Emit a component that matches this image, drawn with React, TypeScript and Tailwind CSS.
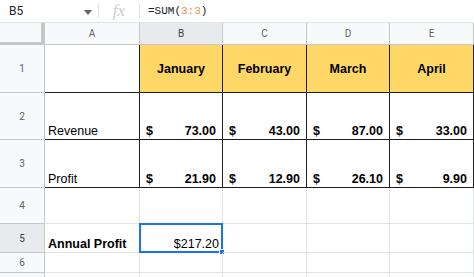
import type { ReactNode } from 'react';

const cols = ['A', 'B', 'C', 'D', 'E', ''];
const rowHeights = ['h-[48px]', 'h-[47px]', 'h-[48px]', 'h-[36px]', 'h-[29px]', 'h-[20px]', 'h-[20px]'];

type Row = {
  cells: ReactNode[];
  bold?: boolean;
};

function Money({ value }: { value: string }) {
  return (
    <div className="flex w-full items-end justify-between pl-[6px] pr-[6px] pb-[1px] font-bold leading-[14px]">
      <span>$</span>
      <span>{value}</span>
    </div>
  );
}

function Month({ name }: { name: string }) {
  return <div className="flex h-full w-full items-center justify-center pt-[2px] font-bold">{name}</div>;
}

function Label({ text, bold }: { text: string; bold?: boolean }) {
  return <div className={`w-full pl-[3px] pb-[1px] leading-[14px] ${bold ? 'font-bold' : ''}`}>{text}</div>;
}

const rows: Row[] = [
  { cells: [null, <Month name="January" />, <Month name="February" />, <Month name="March" />, <Month name="April" />, null], bold: true },
  { cells: [<Label text="Revenue" />, <Money value="73.00" />, <Money value="43.00" />, <Money value="87.00" />, <Money value="33.00" />, null], bold: true },
  { cells: [<Label text="Profit" />, <Money value="21.90" />, <Money value="12.90" />, <Money value="26.10" />, <Money value="9.90" />, null], bold: true },
  { cells: [null, null, null, null, null, null] },
  {
    cells: [
      <Label text="Annual Profit" bold />,
      <div className="w-full pr-[3px] pb-[1px] text-right leading-[14px]">$217.20</div>,
      null,
      null,
      null,
      null,
    ],
  },
  { cells: [null, null, null, null, null, null] },
  { cells: [null, null, null, null, null, null] },
];

export default function App() {
  return (
    <div className="h-[277px] w-[474px] overflow-hidden bg-white font-['Liberation_Sans',Arial,sans-serif] text-[12.5px] text-black">
      {/* formula bar */}
      <div className="flex h-[23px] items-center border-b border-[#e1e3e6]">
        <div className="flex w-[98px] items-center justify-between pl-[9px] pr-[6px] font-['Roboto',sans-serif] text-[12px] text-[#202124]">
          <span>B5</span>
          <svg width="8" height="5" viewBox="0 0 8 5" className="mt-[2px]">
            <path d="M0 0 L8 0 L4 5 Z" fill="#5f6368" />
          </svg>
        </div>
        <div className="h-[14px] w-px bg-[#e1e3e6]" />
        <div className="flex w-[40px] justify-center font-['Liberation_Serif',serif] text-[17px] italic text-[#c9cccf]">fx</div>
        <div className="h-[14px] w-px bg-[#e1e3e6]" />
        <div className="pl-[8px] font-['Liberation_Mono',monospace] text-[11px] text-[#202124]">
          =SUM(<span className="text-[#e69138]">3:3</span>)
        </div>
      </div>

      <div className="grid grid-cols-[45px_95px_83px_84px_83px_84px_60px]">
        {/* column headers */}
        <div className="h-[22px] border-r-[4px] border-b-[3px] border-[#c4c7c5] bg-[#f8f9fa]" />
        {cols.map((c, i) => (
          <div
            key={i}
            className={`flex h-[22px] items-center justify-center border-r border-b border-[#c4c7c5] font-['Roboto',sans-serif] text-[10px] ${
              c === 'B' ? 'bg-[#e8eaed] text-[#3c4043]' : 'bg-[#f8f9fa] text-[#5f6368]'
            }`}
          >
            {c}
          </div>
        ))}

        {rows.map((row, r) => (
          <Line key={r} index={r} row={row} />
        ))}
      </div>
    </div>
  );
}

function Line({ index, row }: { index: number; row: Row }) {
  const h = rowHeights[index];
  const selectedRow = index === 4;
  return (
    <>
      <div
        className={`flex ${h} items-center justify-center border-r border-b border-[#c4c7c5] font-['Roboto',sans-serif] text-[10px] ${
          selectedRow ? 'bg-[#e8eaed] text-[#3c4043]' : 'bg-[#f8f9fa] text-[#5f6368]'
        }`}
      >
        {index < 6 ? index + 1 : ''}
      </div>
      {row.cells.map((cell, c) => {
        const thick = !!row.bold && c < 5;
        const yellow = index === 0 && c > 0 && c < 5;
        const selected = index === 4 && c === 1;
        return (
          <div
            key={c}
            className={`relative flex ${h} items-end border-r border-b ${
              thick ? 'border-[#1f1f1f]' : 'border-[#e2e3e3]'
            } ${yellow ? 'bg-[#fed766]' : ''}`}
          >
            {cell}
            {selected && (
              <>
                <div className="absolute -left-px -top-px bottom-[-1px] right-[-1px] border-2 border-[#1a73e8]" />
                <div className="absolute bottom-[-3px] right-[-3px] h-[6px] w-[6px] border border-white bg-[#1a73e8]" />
              </>
            )}
          </div>
        );
      })}
    </>
  );
}
